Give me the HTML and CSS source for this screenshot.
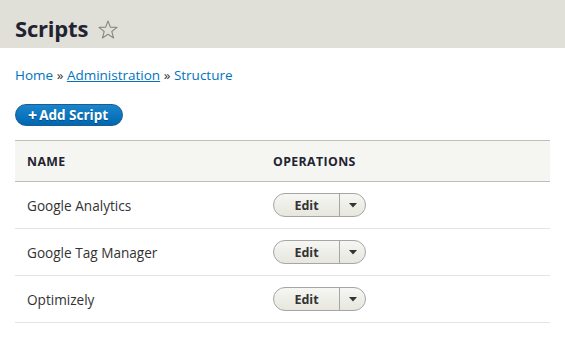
FILE: index.html
```html
<!DOCTYPE html>
<html>
<head>
<meta charset="utf-8">
<link rel="stylesheet" href="styles.css">
</head>
<body>
<header class="page-header">
  <h1 class="page-title">Scripts</h1>
  <svg class="star" width="20" height="19" viewBox="0 0 20 19"><polygon points="10,1 12.4,7.2 19,7.4 13.8,11.5 15.6,18 10,14.3 4.4,18 6.2,11.5 1,7.4 7.6,7.2" fill="none" stroke="#8a8a7d" stroke-width="1.1" stroke-linejoin="round"/></svg>
</header>
<main class="content">
  <nav class="breadcrumb">
    <a href="#">Home</a> » <a href="#" class="underlined">Administration</a> » <a href="#">Structure</a>
  </nav>
  <a href="#" class="button-primary"><span class="plus">+</span>Add Script</a>
  <table class="listing">
    <thead>
      <tr><th class="col-name">Name</th><th>Operations</th></tr>
    </thead>
    <tbody>
      <tr><td>Google Analytics</td><td><span class="dropbutton"><span class="db-main">Edit</span><span class="db-toggle"><svg width="8" height="5" viewBox="0 0 8 5"><polygon points="0,0 8,0 4,4.5" fill="#333"/></svg></span></span></td></tr>
      <tr><td>Google Tag Manager</td><td><span class="dropbutton"><span class="db-main">Edit</span><span class="db-toggle"><svg width="8" height="5" viewBox="0 0 8 5"><polygon points="0,0 8,0 4,4.5" fill="#333"/></svg></span></span></td></tr>
      <tr><td>Optimizely</td><td><span class="dropbutton"><span class="db-main">Edit</span><span class="db-toggle"><svg width="8" height="5" viewBox="0 0 8 5"><polygon points="0,0 8,0 4,4.5" fill="#333"/></svg></span></span></td></tr>
    </tbody>
  </table>
</main>
</body>
</html>
```

FILE: styles.css
```css
html, body {
  margin: 0;
  padding: 0;
  background: #fff;
  font-family: "Open Sans", "DejaVu Sans", sans-serif;
  color: #333;
}
.page-header {
  background: #e0e0d8;
  height: 48px;
  box-sizing: border-box;
  padding: 17px 15px 0;
  display: flex;
  align-items: flex-start;
  gap: 10px;
}
.page-title {
  margin: 0;
  font-size: 22px;
  font-weight: 700;
  color: #222330;
  letter-spacing: -0.2px;
  line-height: 22px;
}
.star {
  display: block;
  margin-top: 3px;
}
.content {
  padding: 18px 15px 0;
}
.breadcrumb {
  font-size: 13.5px;
  line-height: 18px;
  color: #333;
}
.breadcrumb a {
  color: #0074bd;
  text-decoration: none;
}
.breadcrumb a.underlined {
  text-decoration: underline;
}
.button-primary {
  display: inline-flex;
  align-items: center;
  margin-top: 20px;
  height: 22px;
  padding: 0 14px 0 12px;
  border-radius: 12px;
  background: linear-gradient(#1a85cc, #0067b0);
  border: 1px solid #1e5c90;
  box-sizing: border-box;
  color: #fff;
  font-size: 13.5px;
  font-weight: 700;
  text-decoration: none;
  text-shadow: 0 1px 0 rgba(0,0,0,0.3);
}
.button-primary .plus {
  font-size: 16px;
  margin-right: 2px;
}
.listing {
  margin-top: 14px;
  width: 100%;
  border-collapse: collapse;
  font-size: 13.6px;
}
.listing th {
  background: #f5f5f2;
  border-top: 1px solid #bfbfba;
  border-bottom: 1px solid #bfbfba;
  text-align: left;
  text-transform: uppercase;
  font-size: 12.3px;
  letter-spacing: 0.4px;
  font-weight: 700;
  color: #222330;
  height: 41px;
  padding: 0 12px;
  box-sizing: border-box;
}
.listing .col-name {
  width: 246px;
}
.listing td {
  border-bottom: 1px solid #e6e4df;
  height: 47px;
  box-sizing: border-box;
  padding: 0 12px;
  color: #333;
}
.dropbutton {
  display: inline-flex;
  height: 24px;
  border: 1px solid #a6a6a6;
  border-radius: 12px;
  box-sizing: border-box;
  background: linear-gradient(#f6f6f3, #e7e7df);
  overflow: hidden;
  vertical-align: middle;
}
.db-main {
  width: 65px;
  display: flex;
  align-items: center;
  justify-content: center;
  font-weight: 700;
  font-size: 12.5px;
  color: #333;
  border-right: 1px solid #a6a6a6;
}
.db-toggle {
  width: 25px;
  display: flex;
  align-items: center;
  justify-content: center;
}
```
